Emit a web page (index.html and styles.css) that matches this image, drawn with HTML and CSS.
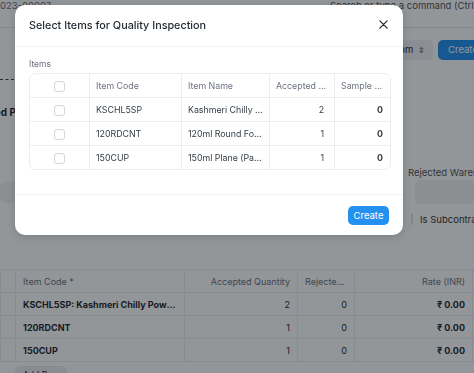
FILE: index.html
```html
<!DOCTYPE html>
<html lang="en">
<head>
    <meta charset="UTF-8">
    <meta name="viewport" content="width=device-width, initial-scale=1.0">
    <title>Purchase Receipt</title>
    <link rel="stylesheet" href="styles.css">
</head>
<body>
    <div class="page">
        <header class="navbar">
            <span class="doc-name">023-00007</span>
            <span class="search">
                <svg width="9" height="9" viewBox="0 0 10 10"><circle cx="4.2" cy="4.2" r="3.2" fill="none" stroke="#555" stroke-width="1.1"/><path d="M6.6 6.6 9 9" stroke="#555" stroke-width="1.1"/></svg>
                Search or type a command (Ctrl + G)
            </span>
        </header>
        <div class="page-head">
            <button class="btn">Get Items From <span class="caret">&#8661;</span></button>
            <button class="btn btn-primary">Create</button>
        </div>
        <div class="form">
            <div class="col-left">
                <div class="dash"></div>
                <div class="section-title">Received Products</div>
                <div class="control"></div>
            </div>
            <div class="col-right">
                <div class="label">Rejected Warehouse</div>
                <div class="control"></div>
                <div class="check"><span class="box"></span>Is Subcontracted</div>
            </div>
        </div>
        <table class="grid">
            <colgroup>
                <col style="width: 15px"><col style="width: 169px"><col style="width: 113px"><col style="width: 57px"><col style="width: 118px"><col style="width: 20px">
            </colgroup>
            <tr class="grid-head">
                <td></td><td>Item Code *</td><td class="num">Accepted Quantity</td><td>Rejected Quantity</td><td class="num">Rate (INR)</td><td></td>
            </tr>
            <tr>
                <td></td><td class="bold">KSCHL5SP: Kashmeri Chilly Powder ...</td><td class="num">2</td><td class="num">0</td><td class="num bold">₹ 0.00</td><td></td>
            </tr>
            <tr>
                <td></td><td class="bold">120RDCNT</td><td class="num">1</td><td class="num">0</td><td class="num bold">₹ 0.00</td><td></td>
            </tr>
            <tr>
                <td></td><td class="bold">150CUP</td><td class="num">1</td><td class="num">0</td><td class="num bold">₹ 0.00</td><td></td>
            </tr>
        </table>
        <button class="btn add-row">Add Row</button>
    </div>

    <div class="backdrop"></div>

    <div class="modal">
        <div class="modal-header">
            <h4>Select Items for Quality Inspection</h4>
            <svg class="close" width="9" height="9" viewBox="0 0 10 10"><path d="M1 1 9 9M9 1 1 9" stroke="#1f272e" stroke-width="1.4" stroke-linecap="round"/></svg>
        </div>
        <div class="modal-body">
            <div class="field-label">Items</div>
            <table class="items">
                <colgroup>
                    <col style="width: 59px"><col style="width: 92px"><col style="width: 88px"><col style="width: 65px"><col style="width: 56px">
                </colgroup>
                <tr class="items-head">
                    <td class="chk"><span class="box"></span></td><td>Item Code</td><td>Item Name</td><td>Accepted Quantity</td><td>Sample Size</td>
                </tr>
                <tr>
                    <td class="chk"><span class="box"></span></td><td>KSCHL5SP</td><td>Kashmeri Chilly Powder</td><td class="num">2</td><td class="num bold">0</td>
                </tr>
                <tr>
                    <td class="chk"><span class="box"></span></td><td>120RDCNT</td><td>120ml Round Food Container</td><td class="num">1</td><td class="num bold">0</td>
                </tr>
                <tr>
                    <td class="chk"><span class="box"></span></td><td>150CUP</td><td>150ml Plane (Paper Cup)</td><td class="num">1</td><td class="num bold">0</td>
                </tr>
            </table>
        </div>
        <div class="modal-footer">
            <button class="btn btn-primary btn-create">Create</button>
        </div>
    </div>
</body>
</html>
```

FILE: styles.css
```css
body {
    margin: 0;
    font-family: Inter, "Noto Sans", sans-serif;
    color: #1f272e;
    background: #fff;
    overflow: hidden;
    width: 474px;
    height: 373px;
}

button {
    font-family: inherit;
    border: none;
}

.page {
    width: 474px;
}

.navbar {
    height: 27px;
    border-bottom: 1px solid #e2e6e9;
    display: flex;
    justify-content: space-between;
    font-size: 9.5px;
    line-height: 12px;
    color: #525252;
}

.doc-name {
    color: #6b7280;
}

.search {
    width: 149px;
    display: flex;
    gap: 5px;
    align-items: flex-start;
    white-space: nowrap;
    overflow: hidden;
}

.search svg {
    margin-top: 1px;
}

.page-head {
    height: 41px;
    display: flex;
    justify-content: flex-end;
    align-items: center;
    gap: 5px;
    padding-top: 1px;
}

.btn {
    height: 20px;
    padding: 0 8px;
    border-radius: 5px;
    background: #f0f1f2;
    font-size: 9.5px;
    color: #1f272e;
    white-space: nowrap;
}

.caret {
    font-size: 8px;
    color: #555;
    margin-left: 2px;
}

.btn-primary {
    background: #2490ef;
    color: #fff;
}

.page-head .btn-primary {
    width: 50px;
    margin-right: -14px;
}

.form {
    height: 199px;
    display: grid;
    grid-template-columns: 408px 66px;
}

.col-left {
    overflow: hidden;
}

.dash {
    width: 14px;
    margin-top: 9px;
    border-top: 1px dashed #444;
}

.section-title {
    margin-top: 26px;
    margin-left: -38px;
    font-size: 10px;
    font-weight: 700;
    line-height: 12px;
}

.control {
    height: 21px;
    border-radius: 5px;
    background: #f3f3f3;
}

.col-left .control {
    margin-top: 64px;
    margin-right: 20px;
}

.col-right {
    white-space: nowrap;
}

.label {
    margin-top: 97px;
    font-size: 9.5px;
    line-height: 12px;
    color: #525252;
}

.col-right .control {
    margin-top: 1px;
    height: 24px;
    margin-left: 7px;
}

.check {
    display: flex;
    align-items: center;
    gap: 4px;
    margin-top: 9px;
    margin-left: 3px;
    font-size: 9.5px;
    color: #333;
}

.box {
    display: inline-block;
    width: 9px;
    height: 9px;
    border: 1px solid #d1d8dd;
    border-radius: 3px;
    background: #fff;
}

.col-right .box {
    width: 10px;
    height: 10px;
    margin-right: 3px;
    background: #f0f0f0;
    border-color: #e0e0e0;
}

.grid {
    table-layout: fixed;
    width: 492px;
    border-collapse: collapse;
    font-size: 9px;
}

.grid td {
    height: 22px;
    border: 1px solid #ebeef0;
    padding: 0 7px;
    white-space: nowrap;
    overflow: hidden;
    text-overflow: ellipsis;
}

.grid-head td {
    color: #6b7280;
}

.grid .num {
    text-align: right;
}

.bold {
    font-weight: 700;
}

.add-row {
    margin: 4px 0 0 15px;
    height: 18px;
    background: #eeeeee;
    font-size: 8.5px;
}

.backdrop {
    position: fixed;
    inset: 0;
    background: rgba(10, 16, 22, 0.44);
}

.modal {
    position: fixed;
    left: 15px;
    top: 5px;
    width: 388px;
    background: #fff;
    border-radius: 10px;
    box-shadow: 0 2px 8px rgba(0, 0, 0, 0.15);
}

.modal-header {
    height: 41px;
    display: flex;
    align-items: center;
    justify-content: space-between;
    padding: 0 15px 0 14px;
    border-bottom: 1px solid #f2f2f2;
}

.modal-header h4 {
    margin: 0;
    font-size: 10.8px;
    font-weight: 500;
    color: #1f272e;
}

.close {
    margin-top: -2px;
}

.modal-body {
    padding: 12px 14px 24px;
    border-bottom: 1px solid #f2f2f2;
}

.field-label {
    font-size: 8.5px;
    line-height: 10px;
    color: #6b7280;
    margin-bottom: 4px;
}

.items {
    table-layout: fixed;
    width: 360px;
    border-collapse: separate;
    border-spacing: 0;
    border: 1px solid #ebeef0;
    border-radius: 6px;
    font-size: 8.8px;
}

.items td {
    height: 23px;
    padding: 0 6px;
    border-left: 1px solid #ebeef0;
    border-top: 1px solid #ebeef0;
    white-space: nowrap;
    overflow: hidden;
    text-overflow: ellipsis;
    color: #333c44;
}

.items td:first-child {
    border-left: none;
}

.items tr:first-child td {
    border-top: none;
}

.items-head td {
    color: #6b7280;
}

.items .chk {
    text-align: center;
}

.items .chk .box {
    vertical-align: middle;
}

.items .num {
    text-align: right;
    padding-right: 10px;
}

.items td:last-child.num {
    padding-right: 7px;
}

.modal-footer {
    height: 40px;
    display: flex;
    align-items: center;
    justify-content: flex-end;
    padding: 0 14px;
}

.btn-create {
    width: 41px;
    height: 19px;
    padding: 0;
    font-size: 9.5px;
}
```
